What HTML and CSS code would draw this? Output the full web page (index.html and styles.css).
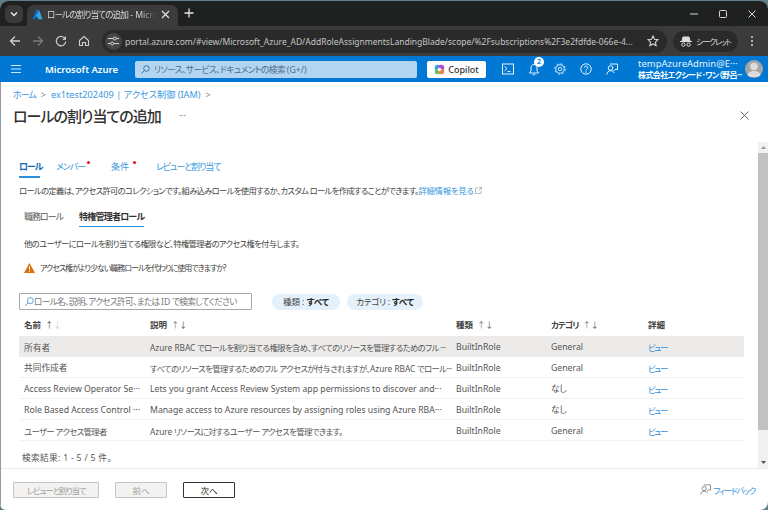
FILE: index.html
```html
<!DOCTYPE html>
<html lang="ja">
<head>
<meta charset="utf-8">
<title>ロールの割り当ての追加</title>
<link rel="stylesheet" href="styles.css">
</head>
<body>
<div class="window">
  <div class="tabstrip">
    <div class="tab-search"><svg width="10" height="10" viewBox="0 0 10 10"><path d="M2 3.500 5 6.500 8 3.500" fill="none" stroke="#e8e8e8" stroke-width="1.500"/></svg></div>
    <div class="tab">
      <svg class="favicon" width="11" height="11" viewBox="0 0 14 14"><path d="M5.200 1H9L4.400 13H.6z" fill="#0a6cc4"/><path d="M9 1l4.400 12H8.200L6.400 9.600H4.200L7.800 4z" fill="#35a4ea"/></svg>
      <span class="tab-title"><span class="tab-ja">ロールの割り当ての追加</span> - Microsoft Azure</span>
      <svg class="tab-x" width="9" height="9" viewBox="0 0 9 9"><path d="M1 1 8 8M8 1 1 8" stroke="#e4e4e4" stroke-width="1.200"/></svg>
    </div>
    <svg class="tab-plus" width="10" height="10" viewBox="0 0 10 10"><path d="M5 .5v9M.5 5h9" stroke="#e4e4e4" stroke-width="1.300"/></svg>
    <div class="win-controls">
      <svg width="10" height="10" viewBox="0 0 10 10"><path d="M1 5h8" stroke="#d6d6d6"/></svg>
      <svg width="10" height="10" viewBox="0 0 10 10"><rect x="1.500" y="1.500" width="7" height="7" rx="1" fill="none" stroke="#d6d6d6"/></svg>
      <svg width="10" height="10" viewBox="0 0 10 10"><path d="M1.500 1.500l7 7M8.500 1.500l-7 7" stroke="#d6d6d6"/></svg>
    </div>
  </div>
  <div class="toolbar">
    <div class="nav-icons">
      <svg width="12" height="12" viewBox="0 0 12 12"><path d="M11 6H1.500M6 1.500 1.500 6 6 10.500" fill="none" stroke="#cfcfcf" stroke-width="1.300"/></svg>
      <svg width="12" height="12" viewBox="0 0 12 12"><path d="M1 6h9.500M6 1.500 10.500 6 6 10.500" fill="none" stroke="#7b7b7b" stroke-width="1.300"/></svg>
      <svg width="12" height="12" viewBox="0 0 12 12"><path d="M10.300 4.200A4.700 4.700 0 1 0 10.700 6.500" fill="none" stroke="#cfcfcf" stroke-width="1.200"/><path d="M11 1v3.800H7.200z" fill="#cfcfcf"/></svg>
      <svg width="12" height="12" viewBox="0 0 12 12"><path d="M1.500 5.500 6 1.500l4.500 4v5H7.500V7.500h-3v3h-3z" fill="none" stroke="#cfcfcf" stroke-width="1.100"/></svg>
    </div>
    <div class="omnibox">
      <span class="site-btn"><svg width="11" height="10" viewBox="0 0 11 10"><path d="M0 2.500h5M8.500 2.500H11M0 7.500h2.500M6 7.500h5" stroke="#d4d4d4"/><circle cx="6.800" cy="2.500" r="1.500" fill="none" stroke="#d4d4d4"/><circle cx="4.200" cy="7.500" r="1.500" fill="none" stroke="#d4d4d4"/></svg></span>
      <span class="url">portal.azure.com/#view/Microsoft_Azure_AD/AddRoleAssignmentsLandingBlade/scope/%2Fsubscriptions%2F3e2fdfde-066e-4...</span>
      <svg class="star" width="12" height="12" viewBox="0 0 12 12"><path d="M6 1l1.500 3.300 3.500.4-2.600 2.400.7 3.500L6 8.900 2.900 10.600l.7-3.500L1 4.700l3.500-.4z" fill="none" stroke="#d4d4d4" stroke-width="1.100"/></svg>
    </div>
    <div class="incognito">
      <svg width="12" height="11" viewBox="0 0 12 11"><path d="M0 5.500h12M2 5 3 1h6l1 4" fill="#dedede" stroke="#dedede"/><circle cx="3.400" cy="8.600" r="1.700" fill="none" stroke="#dedede"/><circle cx="8.600" cy="8.600" r="1.700" fill="none" stroke="#dedede"/></svg>
      <span>シークレット</span>
    </div>
    <svg class="kebab" width="4" height="12" viewBox="0 0 4 12"><circle cx="2" cy="2" r="1.100" fill="#cfcfcf"/><circle cx="2" cy="6" r="1.100" fill="#cfcfcf"/><circle cx="2" cy="10" r="1.100" fill="#cfcfcf"/></svg>
  </div>
  <header class="portal-bar">
    <svg class="burger" width="10" height="8" viewBox="0 0 10 8"><path d="M0 .5h10M0 4h10M0 7.500h10" stroke="#cfe4f6"/></svg>
    <span class="brand">Microsoft Azure</span>
    <div class="global-search">
      <svg width="9" height="9" viewBox="0 0 9 9"><circle cx="5.500" cy="3.500" r="2.800" fill="none" stroke="#3f6f99"/><path d="M3.500 5.500.7 8.300" stroke="#3f6f99"/></svg>
      <span>リソース、サービス、ドキュメントの検索 <span class="lat">(G+/)</span></span>
    </div>
    <div class="copilot">
      <svg width="11" height="11" viewBox="0 0 12 12"><circle cx="4" cy="4" r="3.200" fill="#3d9be9"/><circle cx="8" cy="4" r="3.200" fill="#b04ad8"/><circle cx="4" cy="8" r="3.200" fill="#5fc36a"/><circle cx="8" cy="8" r="3.200" fill="#f0804a"/><circle cx="6" cy="6" r="1.800" fill="#fff"/></svg>
      <span>Copilot</span>
    </div>
    <div class="portal-icons">
      <svg width="12" height="12" viewBox="0 0 12 12"><rect x=".5" y="1" width="11" height="10" fill="none" stroke="#fff" stroke-width=".9"/><path d="M2.500 3.500 5 5.700 2.500 8M5.500 8.500h3" fill="none" stroke="#fff" stroke-width=".9"/></svg>
      <span class="bell"><svg width="12" height="13" viewBox="0 0 12 13"><path d="M6 1.500C3.800 1.500 3 3.300 3 5v2.800L1.500 10h9L9 7.800V5C9 3.300 8.200 1.500 6 1.500zM4.700 11.200c.3 1 2.300 1 2.600 0" fill="none" stroke="#fff" stroke-width=".9"/></svg><b class="badge">2</b></span>
      <svg width="12" height="12" viewBox="0 0 12 12"><circle cx="6" cy="6" r="4.200" fill="none" stroke="#dcecf9" stroke-width=".9"/><circle cx="6" cy="6" r="5.200" fill="none" stroke="#dcecf9" stroke-width="1" stroke-dasharray="2 2.080"/><circle cx="6" cy="6" r="1.700" fill="none" stroke="#dcecf9" stroke-width=".9"/></svg>
      <svg width="12" height="12" viewBox="0 0 12 12"><circle cx="6" cy="6" r="5.200" fill="none" stroke="#fff" stroke-width=".9"/><path d="M4.300 4.700C4.300 2.600 7.800 2.600 7.800 4.600 7.800 6 6 5.900 6 7.400" fill="none" stroke="#fff" stroke-width=".9"/><circle cx="6" cy="9" r=".7" fill="#fff"/></svg>
      <svg width="12" height="12" viewBox="0 0 12 12"><circle cx="4.500" cy="5" r="2.300" fill="none" stroke="#fff" stroke-width=".9"/><path d="M.8 11.500c.3-2.400 1.600-3.800 3.700-3.800s3 1 3.500 2.300M4 1h7.500v5.500H9l-1.500 1.500" fill="none" stroke="#fff" stroke-width=".9"/></svg>
    </div>
    <div class="account">
      <span class="acct-name">tempAzureAdmin@E···</span>
      <span class="acct-org">株式会社エクシード･ワン（野呂···</span>
    </div>
    <div class="avatar"><svg width="18" height="18" viewBox="0 0 18 18"><circle cx="9" cy="6.500" r="3.800" fill="#dcdcdc"/><path d="M2 17c.4-4 3-6 7-6s6.600 2 7 6z" fill="#dcdcdc"/></svg></div>
  </header>
  <main class="blade">
    <nav class="crumbs">
      <a class="crumb-home">ホーム</a><i>&gt;</i><a>ex1test202409 | アクセス制御 (IAM)</a><i>&gt;</i>
    </nav>
    <div class="title-row">
      <h1>ロールの割り当ての追加</h1>
      <span class="more">···</span>
      <svg class="close" width="9" height="9" viewBox="0 0 9 9"><path d="M.5.500l8 8M8.500.500l-8 8" stroke="#555" stroke-width=".9"/></svg>
    </div>
    <div class="scroll-area">
      <div class="scroll-content">
        <div class="wizard-tabs">
          <span class="wtab active">ロール</span>
          <span class="wtab dot t-member">メンバー</span>
          <span class="wtab dot t-cond">条件</span>
          <span class="wtab">レビューと割り当て</span>
        </div>
        <p class="intro">ロールの定義は、アクセス許可のコレクションです。組み込みロールを使用するか、カスタム ロールを作成することができます。<a>詳細情報を見る</a>
          <svg width="7" height="7" viewBox="0 0 7 7"><path d="M3 1H.5v5.500H6V4M4 .5h2.500V3M6.500.5 3 4" fill="none" stroke="#9a9a9a" stroke-width=".7"/></svg></p>
        <div class="sub-tabs">
          <span class="stab">職務ロール</span>
          <span class="stab active">特権管理者ロール</span>
        </div>
        <p class="sub-desc">他のユーザーにロールを割り当てる権限など、特権管理者のアクセス権を付与します。</p>
        <p class="warn"><svg width="11" height="10" viewBox="0 0 11 10"><path d="M5.500 0 11 10H0z" fill="#d8710f"/><path d="M5.500 3.200v3.500M5.500 7.500v1.200" stroke="#fff"/></svg><span>アクセス権がより少ない職務ロールを代わりに使用できますか?</span></p>
        <div class="filters">
          <div class="role-search">
            <svg width="10" height="10" viewBox="0 0 10 10"><circle cx="6.300" cy="3.700" r="3" fill="none" stroke="#5a9fd8"/><path d="M4 6 1 9" stroke="#5a9fd8"/></svg>
            <span>ロール名、説明、アクセス許可、または <span class="lat">ID</span> で検索してください</span>
          </div>
          <span class="pill type-pill">種類 : <b>すべて</b></span>
          <span class="pill cat-pill">カテゴリ : <b>すべて</b></span>
        </div>
        <div class="table">
          <div class="row head">
            <span>名前 <em>↑<u>↓</u></em></span>
            <span>説明 <em><s>↑</s>↓</em></span>
            <span>種類 <em><s>↑</s>↓</em></span>
            <span><span class="ja">カテゴリ</span> <em><s>↑</s>↓</em></span>
            <span>詳細</span>
          </div>
          <div class="row selected">
            <span>所有者</span><span class="cut ja"><span class="lat">Azure RBAC</span> でロールを割り当てる権限を含め、すべてのリソースを管理するためのフル ···</span><span>BuiltInRole</span><span>General</span><a class="view">ビュー</a>
          </div>
          <div class="row">
            <span>共同作成者</span><span class="cut ja">すべてのリソースを管理するためのフル アクセスが付与されますが、<span class="lat">Azure RBAC</span> でロール···</span><span>BuiltInRole</span><span>General</span><a class="view">ビュー</a>
          </div>
          <div class="row">
            <span class="cut">Access Review Operator Se···</span><span class="cut">Lets you grant Access Review System app permissions to discover and···</span><span>BuiltInRole</span><span>なし</span><a class="view">ビュー</a>
          </div>
          <div class="row">
            <span class="cut">Role Based Access Control ···</span><span class="cut">Manage access to Azure resources by assigning roles using Azure RBA···</span><span>BuiltInRole</span><span>なし</span><a class="view">ビュー</a>
          </div>
          <div class="row">
            <span class="ja">ユーザー アクセス管理者</span><span class="cut ja"><span class="lat">Azure</span> リソースに対するユーザー アクセスを管理できます。</span><span>BuiltInRole</span><span>General</span><a class="view">ビュー</a>
          </div>
        </div>
        <p class="results">検索結果: 1 - 5 / 5 件。</p>
      </div>
      <div class="scrollbar">
        <span class="arrow"><svg width="5" height="3" viewBox="0 0 5 3"><path d="M2.500 0 5 3H0z" fill="#999"/></svg></span>
        <span class="thumb"></span>
        <span class="track"></span>
        <span class="arrow"><svg width="5" height="3" viewBox="0 0 5 3"><path d="M2.500 3 5 0H0z" fill="#555"/></svg></span>
      </div>
    </div>
    <footer class="footer">
      <button class="btn wide" disabled>レビューと割り当て</button>
      <button class="btn" disabled>前へ</button>
      <button class="btn primary">次へ</button>
      <span class="feedback">
        <svg width="11" height="11" viewBox="0 0 12 12"><circle cx="4.500" cy="5" r="2.300" fill="none" stroke="#777" stroke-width=".9"/><path d="M.8 11.500c.3-2.400 1.600-3.800 3.700-3.800s3 1 3.500 2.300M4 1h7.500v5.500H9l-1.500 1.500" fill="none" stroke="#777" stroke-width=".9"/></svg>
        <a>フィードバック</a>
      </span>
    </footer>
  </main>
</div>
</body>
</html>
```
FILE: styles.css
```css
* { box-sizing: border-box; }
html, body { margin: 0; height: 100%; }
body {
  width: 768px;
  height: 510px;
  overflow: hidden;
  background: #5f7f88;
  font-family: "Noto Sans", "Noto Sans CJK JP", sans-serif;
  font-feature-settings: "palt";
  font-size: 9px;
  color: #323130;
}
p { margin: 0; }
a { color: #2e8fdc; }
.lat { letter-spacing: 0; }
.window {
  width: 768px;
  height: 509px;
  margin-top: 1px;
  border-radius: 8px 8px 8px 6px;
  overflow: hidden;
  display: flex;
  flex-direction: column;
  background: #fff;
}

/* browser chrome */
.tabstrip {
  height: 25px;
  flex: none;
  background: #1f2020;
  display: flex;
  align-items: flex-end;
  padding-left: 5px;
  color: #e3e3e3;
}
.tab-search {
  width: 18px;
  height: 18px;
  margin-bottom: 3px;
  border-radius: 6px;
  background: #3a3a3a;
  display: flex;
  align-items: center;
  justify-content: center;
}
.tab {
  width: 151px;
  height: 21px;
  margin-left: 4px;
  padding: 0 6px 2px 5px;
  background: #3b3b3b;
  border-radius: 7px 7px 0 0;
  display: flex;
  align-items: center;
}
.favicon { flex: none; margin-right: 4px; }
.tab-title {
  flex: 1;
  min-width: 0;
  overflow: hidden;
  white-space: nowrap;
  font-size: 8.700px;
  color: #d8d8d8;
  -webkit-mask-image: linear-gradient(to right, #000 85%, transparent);
  mask-image: linear-gradient(to right, #000 85%, transparent);
}
.tab-ja { letter-spacing: -1px; }
.tab-x { flex: none; margin-left: 4px; margin-right: 2px; }
.tab-plus { margin: 0 0 8px 6px; }
.win-controls {
  margin-left: auto;
  margin-bottom: 7px;
  margin-right: 11px;
  display: flex;
  gap: 19px;
}
.toolbar {
  height: 30px;
  flex: none;
  background: #3b3b3b;
  display: flex;
  align-items: center;
  padding-left: 9px;
}
.nav-icons { display: flex; gap: 11px; width: 93px; flex: none; }
.omnibox {
  width: 565px;
  height: 23px;
  flex: none;
  padding: 0 8px 0 3px;
  background: #2a2a2a;
  border-radius: 12px;
  display: flex;
  align-items: center;
}
.site-btn {
  width: 17px;
  height: 17px;
  flex: none;
  border-radius: 50%;
  background: #454545;
  display: flex;
  align-items: center;
  justify-content: center;
}
.url {
  flex: 1;
  min-width: 0;
  margin-left: 3px;
  color: #c4c7c5;
  font-size: 8.500px;
  white-space: nowrap;
  overflow: hidden;
}
.star { flex: none; margin-left: 6px; }
.incognito {
  width: 65px;
  height: 21px;
  flex: none;
  margin-left: 6px;
  padding-left: 7px;
  border-radius: 11px;
  background: #2a2a2a;
  color: #dcdcdc;
  font-size: 8px;
  letter-spacing: -1.200px;
  white-space: nowrap;
  display: flex;
  align-items: center;
  gap: 4px;
}
.kebab { margin-left: 12px; flex: none; }
.portal-bar {
  height: 26px;
  flex: none;
  background: #0078d4;
  color: #fff;
  display: flex;
  align-items: center;
  padding-left: 11px;
}
.burger { flex: none; }
.brand {
  margin-left: 24px;
  width: 90px;
  flex: none;
  font-size: 9.500px;
  font-weight: 600;
  white-space: nowrap;
}
.global-search {
  width: 282px;
  height: 17px;
  flex: none;
  background: #b3d5f1;
  border-radius: 2px;
  padding-left: 6px;
  color: #4b6f8e;
  font-size: 8.700px;
  letter-spacing: -.550px;
  white-space: nowrap;
  display: flex;
  align-items: center;
  gap: 4px;
}
.global-search svg { flex: none; }
.copilot {
  width: 59px;
  height: 17px;
  flex: none;
  margin-left: 10px;
  background: #fff;
  border-radius: 2px;
  color: #333;
  font-size: 9px;
  font-weight: 500;
  display: flex;
  align-items: center;
  justify-content: center;
  gap: 3px;
}
.portal-icons {
  margin-left: 16px;
  display: flex;
  align-items: center;
  gap: 14px;
  width: 136px;
  flex: none;
}
.bell { position: relative; display: flex; }
.badge {
  position: absolute;
  top: -6px;
  left: 6px;
  width: 10px;
  height: 10px;
  border-radius: 50%;
  background: #fff;
  color: #0078d4;
  font-size: 7px;
  font-weight: 600;
  line-height: 10px;
  text-align: center;
}
.account {
  width: 107px;
  flex: none;
  display: flex;
  flex-direction: column;
  white-space: nowrap;
  line-height: 11px;
}
.acct-name { font-size: 9.500px; color: #e8f2fb; }
.acct-org { font-size: 8px; font-weight: 600; letter-spacing: -.600px; }
.avatar {
  width: 18px;
  height: 18px;
  flex: none;
  border-radius: 50%;
  background: #a5a5a5;
  overflow: hidden;
}

/* blade */
.blade {
  flex: 1;
  min-height: 0;
  display: flex;
  flex-direction: column;
  border-left: 1px solid #9a9a9a;
}
.crumbs {
  height: 24px;
  flex: none;
  padding-left: 12px;
  display: flex;
  align-items: center;
  gap: 5px;
  font-size: 9.200px;
}
.crumbs a { color: #3a97dd; }
.crumbs .crumb-home { font-size: 9px; letter-spacing: -1px; }
.crumbs i { font-style: normal; color: #888; font-size: 9px; }
.title-row {
  height: 19px;
  flex: none;
  margin-bottom: 17px;
  padding: 0 19px 0 12px;
  display: flex;
  align-items: center;
}
h1 {
  margin: 0;
  font-size: 15px;
  font-weight: 500;
  letter-spacing: -1px;
  color: #323130;
  white-space: nowrap;
}
.more { margin-left: 18px; color: #777; font-size: 9px; }
.close { margin-left: auto; }
.scroll-area {
  flex: 1;
  min-height: 0;
  display: flex;
  border-bottom: 1px solid #ebebeb;
}
.scroll-content {
  flex: 1;
  min-width: 0;
  padding: 11px 12px 0 18px;
}
.scrollbar {
  width: 10px;
  flex: none;
  background: #f1f1f1;
  display: flex;
  flex-direction: column;
}
.arrow {
  height: 11px;
  flex: none;
  display: flex;
  align-items: center;
  justify-content: center;
}
.thumb { height: 277px; flex: none; background: #c1c1c1; }
.track { flex: 1; }
.wizard-tabs {
  height: 25px;
  display: flex;
  align-items: flex-end;
  font-size: 9px;
  letter-spacing: -1.100px;
}
.wtab {
  position: relative;
  height: 24px;
  padding-top: 6px;
  color: #3a97dd;
  white-space: nowrap;
}
.wtab.active {
  color: #1168b5;
  font-weight: 600;
  border-bottom: 2px solid #2c8fdb;
  width: 21px;
  margin-right: 16px;
}
.wtab.t-member { width: 34px; margin-right: 21px; }
.wtab.t-cond { width: 25px; margin-right: 20px; letter-spacing: 0; }
.wtab.dot::after {
  content: "";
  position: absolute;
  top: 7px;
  right: 0;
  width: 3px;
  height: 3px;
  border-radius: 50%;
  background: #e81123;
}
.intro {
  margin-top: 6px;
  height: 13px;
  line-height: 13px;
  white-space: nowrap;
  font-size: 8.300px;
  letter-spacing: -.650px;
  color: #444;
}
.intro a { color: #3a97dd; letter-spacing: -.2px; }
.sub-tabs {
  margin-top: 9px;
  display: flex;
  gap: 16px;
  padding-left: 5px;
  font-size: 9px;
  height: 21px;
}
.stab { color: #555; padding-top: 4px; letter-spacing: -1px; }
.stab.active {
  color: #323130;
  font-weight: 600;
  letter-spacing: -.8px;
  border-bottom: 1px solid #2c8fdb;
}
.sub-desc {
  margin-top: 10px;
  padding-left: 5px;
  height: 13px;
  line-height: 13px;
  font-size: 8.300px;
  letter-spacing: -.650px;
  color: #444;
}
.warn {
  margin-top: 11px;
  padding-left: 5px;
  height: 13px;
  line-height: 13px;
  font-size: 8px;
  letter-spacing: -1px;
  color: #444;
  display: flex;
  align-items: center;
  gap: 5px;
}
.warn svg { flex: none; }
.filters {
  margin-top: 19px;
  display: flex;
  align-items: center;
}
.role-search {
  width: 233px;
  height: 17px;
  flex: none;
  border: 1px solid #a8a8a8;
  border-radius: 1px;
  padding-left: 4px;
  display: flex;
  align-items: center;
  color: #777;
  font-size: 8.700px;
  letter-spacing: -.700px;
  white-space: nowrap;
}
.role-search svg { flex: none; }
.pill {
  height: 16px;
  line-height: 15px;
  flex: none;
  text-align: center;
  background: #e4f1fb;
  border-radius: 8px;
  color: #444;
  font-size: 8.500px;
}
.type-pill { width: 68px; margin-left: 20px; }
.cat-pill { width: 76px; margin-left: 7px; letter-spacing: -.2px; }
.pill b { color: #222; font-weight: 600; }
.table { margin-top: 5px; width: 725px; }
.row {
  display: grid;
  grid-template-columns: 126px 306px 95px 97px 1fr;
  height: 21px;
  padding: 1px 0 0 5px;
  align-items: center;
  border-bottom: 1px solid #f3f2f1;
  font-size: 8.700px;
  color: #555;
  white-space: nowrap;
}
.cut { overflow: hidden; }
.ja { font-size: 8.300px; letter-spacing: -.550px; }
.view { letter-spacing: -1.500px; font-size: 8.500px; }
.row.head {
  padding: 0 0 3px 5px;
  border-bottom: 0;
  font-weight: 600;
  color: #444;
  font-size: 8.500px;
}
.head .ja { letter-spacing: -1px; font-size: 8.500px; }
.head em { font-style: normal; font-weight: 400; color: #555; margin-left: 2px; font-size: 8px; }
.head u { text-decoration: none; color: #ccc; }
.head s { text-decoration: none; color: #777; }
.row.selected { background: #edebe9; border-bottom: 0; }
.results {
  margin-top: 11px;
  padding-left: 3px;
  font-size: 8.700px;
  letter-spacing: .3px;
  color: #555;
  line-height: 13px;
}
.footer {
  height: 41px;
  flex: none;
  padding: 0 13px 0 12px;
  display: flex;
  align-items: center;
  gap: 16px;
}
.btn {
  width: 52px;
  height: 16px;
  flex: none;
  padding: 0;
  font: inherit;
  font-size: 8.500px;
  border: 1px solid #333;
  border-radius: 1px;
  background: #fff;
  color: #222;
}
.btn.wide { width: 86px; letter-spacing: -1.300px; }
.btn[disabled] {
  background: #f3f2f1;
  border-color: #c8c6c4;
  color: #a19f9d;
}
.feedback {
  margin-left: auto;
  display: flex;
  align-items: center;
  gap: 2px;
  font-size: 8.500px;
  letter-spacing: -1.300px;
}
.feedback svg { flex: none; }
.feedback a { color: #3a97dd; }
```
